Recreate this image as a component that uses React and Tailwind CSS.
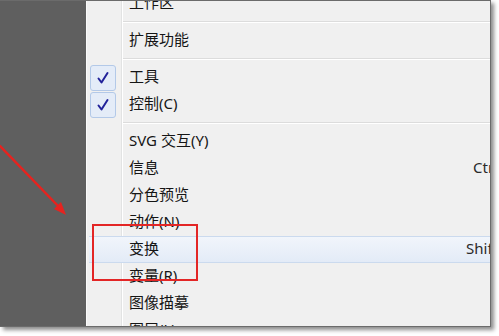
import React from 'react';

const font = { fontFamily: '"Noto Sans", "Noto Sans CJK SC", sans-serif' };

const Separator = () => (
  <div className="flex h-[10px]">
    <div className="w-[35px] shrink-0" />
    <div className="flex-1 pt-[4px] pl-[1px]">
      <div className="h-px bg-[#dcdcdc]" />
      <div className="h-px bg-white" />
    </div>
  </div>
);

const Check = () => (
  <div className="ml-[3px] flex h-[26px] w-[26px] items-center justify-center rounded-[3px] border border-[#b3c9e8] bg-[#e4ecf8]">
    <svg width="14" height="14" viewBox="0 0 14 14" fill="none">
      <path d="M2.5 7.5 L5.5 11.5 L11.5 2" stroke="#22229a" strokeWidth="2" strokeLinecap="round" strokeLinejoin="round" />
    </svg>
  </div>
);

const Row = ({ label, shortcut, checked, active }) => (
  <div
    className={
      'flex h-[27px] items-center ' +
      (active ? 'ml-[2px] border-y border-[#cbdaee] bg-gradient-to-b from-[#f1f5fb] to-[#e3ebf7]' : '')
    }
  >
    <div className={'flex shrink-0 items-center ' + (active ? 'w-[40px]' : 'w-[42px]')}>
      {checked && <Check />}
    </div>
    <span className="-mt-[3px] flex-1 whitespace-nowrap text-[15px] text-[#151515]">{label}</span>
    {shortcut && (
      <span className="-mt-[3px] whitespace-nowrap text-[15px] text-[#2a2a2a]">{shortcut}</span>
    )}
  </div>
);

export default function App() {
  return (
    <div className="relative h-[336px] w-[499px] overflow-hidden bg-white" style={font}>
      <div className="flex h-[327px] w-[491px] overflow-hidden border-t border-r border-b border-[#6b6b6b] shadow-[3px_3px_4px_rgba(0,0,0,0.45)]">
        {/* dark workspace */}
        <div className="w-[86px] shrink-0 bg-[#5f5f5f]" />

        {/* menu */}
        <div className="relative flex-1 overflow-hidden border-l border-[#fafafa] bg-[#f0f0f0]">
          <div className="absolute left-[34px] top-0 bottom-0 w-px bg-[#e2e3e3]" />
          <div className="absolute left-[35px] top-0 bottom-0 w-px bg-white" />
          <div className="relative -mt-[11px] w-[445px] pr-[9px]">
            <Row label="工作区" />
            <Separator />
            <Row label="扩展功能" />
            <Separator />
            <Row label="工具" checked />
            <Row label="控制(C)" checked />
            <Separator />
            <Row label="SVG 交互(Y)" />
            <Row label="信息" shortcut="Ctrl+F8" />
            <Row label="分色预览" />
            <Row label="动作(N)" />
            <Row label="变换" shortcut="Shift+F8" active />
            <Row label="变量(R)" />
            <Row label="图像描摹" />
            <Row label="图层(L)" shortcut="F7" />
          </div>
        </div>
      </div>

      {/* annotation: red box */}
      <div className="absolute left-[92px] top-[224px] h-[57px] w-[106px] border-2 border-[#e32626]" />

      {/* annotation: red arrow */}
      <svg className="absolute left-0 top-0" width="90" height="230" viewBox="0 0 90 230">
        <line x1="-2" y1="144" x2="60" y2="208" stroke="#e6231f" strokeWidth="2.5" />
        <path d="M66 215 L54 209 L61 202 Z" fill="#e6231f" />
      </svg>
    </div>
  );
}
